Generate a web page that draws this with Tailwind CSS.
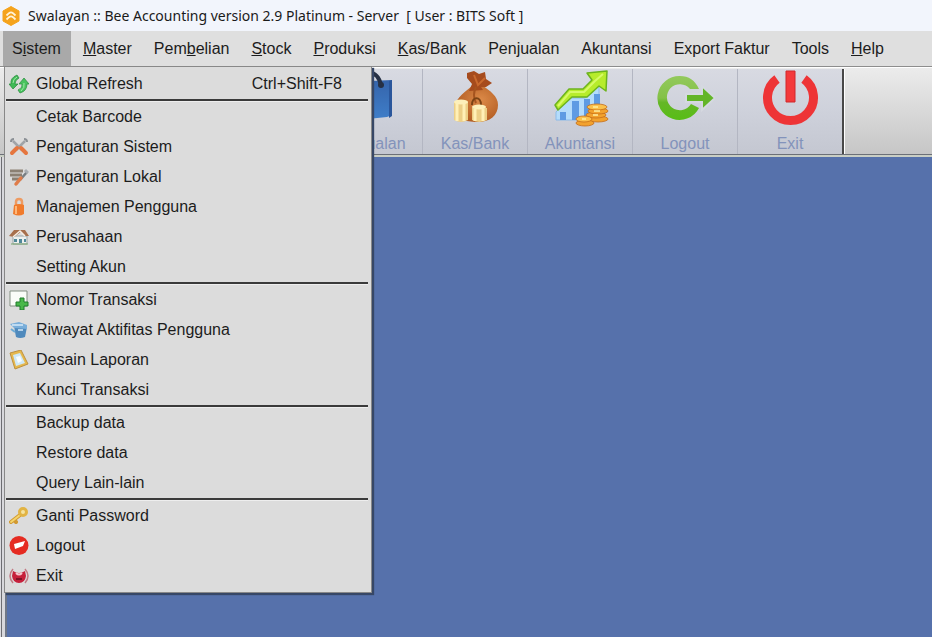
<!doctype html>
<html lang="id">
  <head>
    <meta charset="UTF-8" />
    <meta name="viewport" content="width=device-width, initial-scale=1.0" />
    <title>Bee Accounting</title>
    <script src="https://cdn.jsdelivr.net/npm/@tailwindcss/browser@4"></script>
  </head>
  <body class="min-h-screen flex flex-col bg-[#5671ab] text-base text-[#1c1c1c] font-['Liberation_Sans',Arial,sans-serif]">
    <!-- Title bar -->
    <header class="flex items-center gap-2 h-[31px] px-[2px] bg-[#f2f5fc]">
      <svg class="w-[18px] h-5" viewBox="0 0 18 20">
        <path d="M9 .5 17 5v10l-8 4.500L1 15V5z" fill="#f5a31c" stroke="#f5a31c" stroke-width="1" stroke-linejoin="round" />
        <path d="M4.500 9.500 7 7.200Q9 5.600 11 7.200l2.500 2.300M4.500 13.500 7 11.200q2-1.600 4 0l2.500 2.300" fill="none" stroke="#fff3d8" stroke-width="1.800" />
      </svg>
      <h1 class="text-[14px] whitespace-pre text-[#1a1a1a] font-['Noto_Sans',sans-serif]">Swalayan :: Bee Accounting version 2.9 Platinum - Server  [ User : BITS Soft ]</h1>
    </header>

    <div class="relative">
      <!-- Menu bar -->
      <nav class="flex gap-[2px] h-9 pl-[3px] bg-[#dfdfdf] border-b border-[#8d8d8d] whitespace-nowrap">
        <button class="pl-[9px] pr-[10px] bg-[#a9a9a9]">S<u>i</u>stem</button>
        <button class="px-[10px]"><u>M</u>aster</button>
        <button class="px-[10px]">Pem<u>b</u>elian</button>
        <button class="px-[10px]"><u>S</u>tock</button>
        <button class="px-[10px]"><u>P</u>roduksi</button>
        <button class="px-[10px]"><u>K</u>as/Bank</button>
        <button class="px-[10px]">Penjualan</button>
        <button class="px-[10px]">Akuntansi</button>
        <button class="px-[10px]">Export Faktur</button>
        <button class="px-[10px]">Tools</button>
        <button class="px-[10px]"><u>H</u>elp</button>
      </nav>

      <!-- Toolbar -->
      <div class="border-b-2 border-[#c9cec4]">
        <div class="flex h-[88px] pl-[318px] pt-px bg-linear-to-b from-[#ececec] to-[#c6c6c6] border-t border-t-white border-b border-b-[#6c7078] leading-5 text-[#8393bb]">
          <button class="w-[105px] flex flex-col items-center justify-between bg-linear-to-b from-[#d8dae2] via-[#ced1db] to-[#c4c7d1] border-r border-[#b3b6c2]">
            <svg class="w-[60px] h-[60px]" viewBox="0 0 60 60">
              <defs>
                <linearGradient id="bag" x1="0" y1="0" x2="0" y2="1">
                  <stop offset="0" stop-color="#3564ab" />
                  <stop offset="1" stop-color="#3f7fca" />
                </linearGradient>
              </defs>
              <path d="M8 13 52 11v35l-5 2-39 4z" fill="url(#bag)" />
              <path d="m49 12 3-1v36l-3 2z" fill="#2a569b" />
              <path d="M20 17Q20 4 30 4q8 0 11 12" fill="none" stroke="#263044" stroke-width="4" />
              <circle cx="41" cy="16" r="3" fill="#263044" />
            </svg>
            <span>Penjualan</span>
          </button>
          <button class="w-[105px] flex flex-col items-center justify-between bg-linear-to-b from-[#d8dae2] via-[#ced1db] to-[#c4c7d1] border-r border-[#b3b6c2]">
            <svg class="w-[60px] h-[60px]" viewBox="0 0 60 60">
              <defs>
                <radialGradient id="sack" cx=".6" cy=".4" r=".65">
                  <stop offset="0" stop-color="#dc8a48" />
                  <stop offset="1" stop-color="#b05a20" />
                </radialGradient>
              </defs>
              <path d="M27 17c-10 8-18 14-17 24 1 9 8 11 20 12 14 1 23-6 23-17 0-9-8-14-16-20z" fill="url(#sack)" />
              <path d="m22 4 7-2 5 3 6-2 1 7 6 4-6 4h-5l2 3-14 1 3-7-5-6z" fill="#a64b1d" />
              <path d="m29 6 4 10 7-7" fill="none" stroke="#c9692e" stroke-width="2" />
              <path d="M31 18q-4 8 0 16" fill="none" stroke="#a5541f" stroke-width="2" />
              <path d="M27 36c0-9 9-9 9 0" fill="none" stroke="#7b4314" stroke-width="2" />
              <path d="M9 33v18q7 4 14 0V33z" fill="#eccf87" />
              <path d="M12 34v18m7-18v18" stroke="#fff0b6" stroke-width="3" />
              <ellipse cx="16" cy="33" rx="7" ry="2.500" fill="#fdf0ba" />
              <path d="M27 39v12q7 4 15 0V39z" fill="#eccf87" />
              <path d="M30 40v12m8-12v12" stroke="#fff0b6" stroke-width="3" />
              <ellipse cx="34" cy="38" rx="7" ry="2.500" fill="#fdf0ba" />
            </svg>
            <span>Kas/Bank</span>
          </button>
          <button class="w-[105px] flex flex-col items-center justify-between bg-linear-to-b from-[#d8dae2] via-[#ced1db] to-[#c4c7d1] border-r border-[#b3b6c2]">
            <svg class="w-[60px] h-[60px]" viewBox="0 0 60 60">
              <path d="M6 43 19 29h16l14-13v35H6z" fill="#b4dcfb" stroke="#8bbbea" />
              <path d="M10 43h6v8h-6zM22 32h7v19h-7zM34 30h6v21h-6zM44 25h6v16h-6z" fill="#5e9be3" />
              <path d="m5 36 14-16h14l9-9-5-7 20-2-1 20-7-5-12 11H22L8 41z" fill="#b7ec2c" stroke="#6cb31e" stroke-width="1.500" stroke-linejoin="round" />
              <path d="m8 37 12-14h14l11-11 8-7" fill="none" stroke="#d7fa68" stroke-width="2" />
              <g fill="#f2a22e" stroke="#c56d18" stroke-width=".8">
                <ellipse cx="48" cy="50" rx="10" ry="3" />
                <ellipse cx="46" cy="46" rx="10" ry="3" />
                <ellipse cx="48" cy="42" rx="10" ry="3" />
                <ellipse cx="47" cy="38" rx="10" ry="3" fill="#fbc14c" />
                <ellipse cx="35" cy="54" rx="9" ry="3" />
                <ellipse cx="34" cy="50" rx="8" ry="3" fill="#fbc14c" />
              </g>
              <path d="M43 38h5m-4 4h6m-7 4h5m-16 4h4" stroke="#ffefa0" stroke-width="1.500" />
            </svg>
            <span>Akuntansi</span>
          </button>
          <button class="w-[105px] flex flex-col items-center justify-between bg-linear-to-b from-[#d8dae2] via-[#ced1db] to-[#c4c7d1] border-r border-[#b3b6c2]">
            <svg class="w-[60px] h-[60px]" viewBox="0 0 60 60">
              <defs>
                <linearGradient id="leave" x1="0" y1="0" x2="0" y2="1">
                  <stop offset="0" stop-color="#93c95c" />
                  <stop offset=".5" stop-color="#84c148" />
                  <stop offset=".6" stop-color="#65b727" />
                  <stop offset="1" stop-color="#58bd15" />
                </linearGradient>
              </defs>
              <path d="M44 20Q38 7 25 7A22 22 0 1 0 44 39L36 35A13 13 0 1 1 35 20z" fill="url(#leave)" />
              <path d="M31 25h16v-8l13 12-13 12v-8H31z" fill="#63b528" stroke="#d5d9e0" stroke-width="2" />
            </svg>
            <span>Logout</span>
          </button>
          <button class="w-[106px] flex flex-col items-center justify-between bg-linear-to-b from-[#d8dae2] via-[#ced1db] to-[#c4c7d1] border-r-2 border-[#484848]">
            <svg class="w-[60px] h-[60px]" viewBox="0 0 60 60">
              <path d="M17 10A23 23 0 1 0 44 10" fill="none" stroke="#ee3436" stroke-width="9" />
              <path d="M26 2h9v31h-9z" fill="#f4393b" stroke="#cf292d" stroke-width="1" />
            </svg>
            <span>Exit</span>
          </button>
          <span class="w-px bg-white"></span>
        </div>
      </div>

      <!-- Dropdown of the Sistem menu -->
      <div class="absolute left-1 top-[35px] w-[368px] bg-[#dcdcdc] border border-[#888] shadow-[2px_2px_1px_#374766] pt-[2px] pb-px z-10 text-left whitespace-nowrap">
        <button class="w-full h-[30px] flex items-center gap-[7px] pl-1">
          <svg class="w-5 h-5" viewBox="0 0 20 20">
            <path d="M8 1Q1 4 2 10H0l4 5 5-5H6q0-4 4-6z" fill="#40b957" stroke="#278a3b" stroke-width=".7" />
            <path d="M11 19q7-2 7-9h2l-5-6-5 6h3q1 4-4 6z" fill="#49c35f" stroke="#278a3b" stroke-width=".7" />
            <path d="M4 9q0-4 4-6m7 6q1 5-3 8" fill="none" stroke="#a0eba6" />
          </svg>
          <span>Global Refresh</span>
          <span class="ml-auto pr-[29px]">Ctrl+Shift-F8</span>
        </button>
        <hr class="ml-px mr-[3px] h-[3px] border-t-2 border-[#3a3a3a] border-b border-b-[#eee]" />
        <button class="w-full h-[30px] flex items-center pl-[31px]">Cetak Barcode</button>
        <button class="w-full h-[30px] flex items-center gap-[7px] pl-1">
          <svg class="w-5 h-5" viewBox="0 0 20 20">
            <path d="m4 4 9 9M16 4l-9 9" stroke="#a0a4a8" stroke-width="2.500" />
            <path d="M2 5q0-3 3-3M18 5q0-3-3-3" fill="none" stroke="#8b9095" stroke-width="2" />
            <path d="m8 11-5 5M12 11l5 5" stroke="#e5763f" stroke-width="4" stroke-linecap="round" />
          </svg>
          <span>Pengaturan Sistem</span>
        </button>
        <button class="w-full h-[30px] flex items-center gap-[7px] pl-1">
          <svg class="w-5 h-5" viewBox="0 0 20 20">
            <path d="M1 4h13M1 8h12M3 12h8" stroke="#8b8073" stroke-width="3" />
            <path d="m18 5-7 8" stroke="#777e83" stroke-width="2.500" />
            <path d="m12 11-5 6" stroke="#df7c49" stroke-width="3.500" stroke-linecap="round" />
            <path d="m16 3 3 3" stroke="#a8adb2" stroke-width="3" />
          </svg>
          <span>Pengaturan Lokal</span>
        </button>
        <button class="w-full h-[30px] flex items-center gap-[7px] pl-1">
          <svg class="w-5 h-5" viewBox="0 0 20 20">
            <path d="M7 8V5q0-3 3-3t3 3v3" fill="none" stroke="#ee9b62" stroke-width="2.500" />
            <path d="M5 8q5-2 10 0v9q-5 3-11 0z" fill="#f07b2c" />
            <path d="M7 9v8" stroke="#ffb778" stroke-width="2" />
          </svg>
          <span>Manajemen Pengguna</span>
        </button>
        <button class="w-full h-[30px] flex items-center gap-[7px] pl-1">
          <svg class="w-5 h-5" viewBox="0 0 20 20">
            <path d="M4 9h14v8H4z" fill="#edf0ee" stroke="#98a4a6" />
            <path d="M0 9 5 3h11l4 6h-4l-4-4-7 5z" fill="#a7704d" />
            <path d="m4 10 7-6 5 5" fill="none" stroke="#f5eee5" stroke-width="1.500" />
            <path d="M5 12h3v3H5zm5 0h3v4h-3zm5 0h2v3h-2z" fill="#508899" />
            <path d="M2 17h17" stroke="#79a66e" />
          </svg>
          <span>Perusahaan</span>
        </button>
        <button class="w-full h-[30px] flex items-center pl-[31px]">Setting Akun</button>
        <hr class="ml-px mr-[3px] h-[3px] border-t-2 border-[#3a3a3a] border-b border-b-[#eee]" />
        <button class="w-full h-[30px] flex items-center gap-[7px] pl-1">
          <svg class="w-5 h-5" viewBox="0 0 20 20">
            <path d="M1 1h17v15H1z" fill="#fafcf8" stroke="#849083" />
            <path d="M11 8h4v4h4v4h-4v4h-4v-4H7v-4h4z" fill="#49b84a" stroke="#217d2d" />
          </svg>
          <span>Nomor Transaksi</span>
        </button>
        <button class="w-full h-[30px] flex items-center gap-[7px] pl-1">
          <svg class="w-5 h-5" viewBox="0 0 20 20">
            <path d="m5 6 13 1-2 10q-5 2-9 0z" fill="#4f8abd" />
            <path d="m1 4 9-2 8 3v4L5 8z" fill="#79aeda" />
            <path d="M3 5h11M9 10h5" stroke="#d5eafa" stroke-width="1.500" />
            <path d="m2 9 4 3" stroke="#6baad5" stroke-width="2" />
          </svg>
          <span>Riwayat Aktifitas Pengguna</span>
        </button>
        <button class="w-full h-[30px] flex items-center gap-[7px] pl-1">
          <svg class="w-5 h-5" viewBox="0 0 20 20">
            <path d="m1 3 11-3 7 14-13 5z" fill="#e6b84d" stroke="#bd9140" />
            <path d="m4 5 7-2 5 10-9 3z" fill="#cfe9f8" />
            <path d="m7 7 4-1 2 5-4 2z" fill="#f7fcff" />
          </svg>
          <span>Desain Laporan</span>
        </button>
        <button class="w-full h-[30px] flex items-center pl-[31px]">Kunci Transaksi</button>
        <hr class="ml-px mr-[3px] h-[3px] border-t-2 border-[#3a3a3a] border-b border-b-[#eee]" />
        <button class="w-full h-[30px] flex items-center pl-[31px]">Backup data</button>
        <button class="w-full h-[30px] flex items-center pl-[31px]">Restore data</button>
        <button class="w-full h-[30px] flex items-center pl-[31px]">Query Lain-lain</button>
        <hr class="ml-px mr-[3px] h-[3px] border-t-2 border-[#3a3a3a] border-b border-b-[#eee]" />
        <button class="w-full h-[30px] flex items-center gap-[7px] pl-1">
          <svg class="w-5 h-5" viewBox="0 0 20 20">
            <path d="m11 9-9 7M5 14l2 2" stroke="#d29a32" stroke-width="4" stroke-linecap="round" />
            <path d="m11 9-9 7" stroke="#f5d56c" stroke-width="2" stroke-linecap="round" />
            <circle cx="14" cy="6" r="3.500" fill="#f5e3a0" stroke="#e2b444" stroke-width="3" />
          </svg>
          <span>Ganti Password</span>
        </button>
        <button class="w-full h-[30px] flex items-center gap-[7px] pl-1">
          <svg class="w-5 h-5" viewBox="0 0 20 20">
            <circle cx="10" cy="9.500" r="9.500" fill="#e52b21" />
            <path d="m5 8 11-3-2 5-8 3z" fill="#fff" />
          </svg>
          <span>Logout</span>
        </button>
        <button class="w-full h-[30px] flex items-center gap-[7px] pl-1">
          <svg class="w-5 h-5" viewBox="0 0 20 20">
            <path d="M4 3q-6 7 0 14M16 3q6 7 0 14" fill="none" stroke="#c27a84" stroke-width="1.500" />
            <path d="M4 5q6 4 12 0l1 5q-1 7-7 7t-7-7z" fill="#c6203b" />
            <path d="M7 7q3 3 6 0" fill="none" stroke="#f5c3cb" stroke-width="2" />
            <path d="M7 13h6" stroke="#7f1226" stroke-width="2" />
          </svg>
          <span>Exit</span>
        </button>
      </div>
    </div>

    <!-- Workspace -->
    <div class="flex-1 flex border-l border-[#dcdce0]">
      <main class="flex-1 border-l border-[#6d6d72] bg-[#5671ab] shadow-[inset_3px_0_0_#d8d8dc,inset_5px_0_0_#6f7787]"></main>
    </div>
  </body>
</html>
